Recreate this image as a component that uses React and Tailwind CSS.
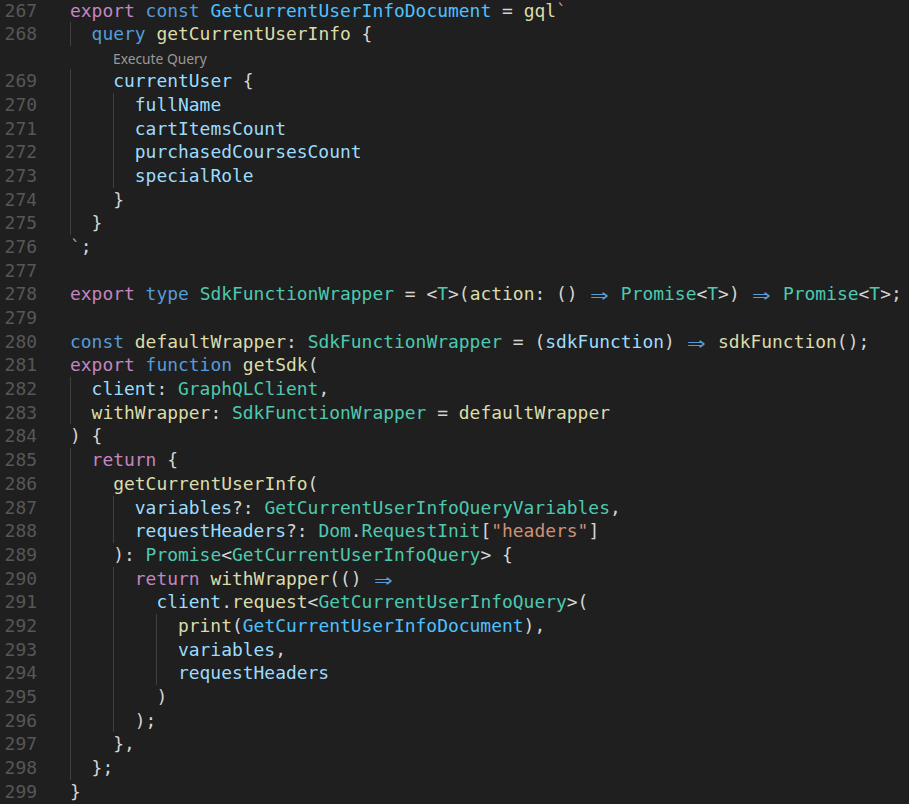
import React from 'react';

const C = {
  k: 'text-[#C586C0]',
  s: 'text-[#569CD6]',
  c: 'text-[#4FC1FF]',
  f: 'text-[#DCDCAA]',
  str: 'text-[#CE9178]',
  v: 'text-[#9CDCFE]',
  t: 'text-[#4EC9B0]',
  p: 'text-[#D4D4D4]',
};

const A = '=>';

// each line: [number, indent, tokens]; token = [text, colorKey] or A
const lines = [
  [267, 0, [['export', 'k'], [' '], ['const', 's'], [' '], ['GetCurrentUserInfoDocument', 'c'], [' = '], ['gql', 'f'], ['`', 'str']]],
  [268, 2, [['query', 's'], [' '], ['getCurrentUserInfo', 'f'], [' {']]],
  ['lens'],
  [269, 4, [['currentUser', 'v'], [' {']]],
  [270, 6, [['fullName', 'v']]],
  [271, 6, [['cartItemsCount', 'v']]],
  [272, 6, [['purchasedCoursesCount', 'v']]],
  [273, 6, [['specialRole', 'v']]],
  [274, 4, [['}']]],
  [275, 2, [['}']]],
  [276, 0, [['`', 'str'], [';']]],
  [277, 0, []],
  [278, 0, [['export', 'k'], [' '], ['type', 's'], [' '], ['SdkFunctionWrapper', 't'], [' = <'], ['T', 't'], ['>('], ['action', 'f'], [': () '], A, [' '], ['Promise', 't'], ['<'], ['T', 't'], ['>) '], A, [' '], ['Promise', 't'], ['<'], ['T', 't'], ['>;']]],
  [279, 0, []],
  [280, 0, [['const', 's'], [' '], ['defaultWrapper', 'f'], [': '], ['SdkFunctionWrapper', 't'], [' = ('], ['sdkFunction', 'v'], [') '], A, [' '], ['sdkFunction', 'f'], ['();']]],
  [281, 0, [['export', 'k'], [' '], ['function', 's'], [' '], ['getSdk', 'f'], ['(']]],
  [282, 2, [['client', 'v'], [': '], ['GraphQLClient', 't'], [',']]],
  [283, 2, [['withWrapper', 'f'], [': '], ['SdkFunctionWrapper', 't'], [' = '], ['defaultWrapper', 'f']]],
  [284, 0, [[') {']]],
  [285, 2, [['return', 'k'], [' {']]],
  [286, 4, [['getCurrentUserInfo', 'f'], ['(']]],
  [287, 6, [['variables', 'v'], ['?: '], ['GetCurrentUserInfoQueryVariables', 't'], [',']]],
  [288, 6, [['requestHeaders', 'v'], ['?: '], ['Dom', 't'], ['.'], ['RequestInit', 't'], ['['], ['"headers"', 'str'], [']']]],
  [289, 4, [['): '], ['Promise', 't'], ['<'], ['GetCurrentUserInfoQuery', 't'], ['> {']]],
  [290, 6, [['return', 'k'], [' '], ['withWrapper', 'f'], ['(() '], A]],
  [291, 8, [['client', 'v'], ['.'], ['request', 'f'], ['<'], ['GetCurrentUserInfoQuery', 't'], ['>(']]],
  [292, 10, [['print', 'f'], ['('], ['GetCurrentUserInfoDocument', 'c'], ['),']]],
  [293, 10, [['variables', 'v'], [',']]],
  [294, 10, [['requestHeaders', 'v']]],
  [295, 8, [[')']]],
  [296, 6, [[');']]],
  [297, 4, [['},']]],
  [298, 2, [['};']]],
  [299, 0, [['}']]],
];

const Indent = ({ n }) => {
  const segs = [];
  for (let k = 0; k < n; k += 4) {
    segs.push(Math.min(4, n - k));
  }
  return segs.map((w, i) => (
    <span
      key={i}
      className={`inline-block h-full border-l border-[#404040] ${w === 4 ? 'w-[4ch]' : 'w-[2ch]'}`}
    />
  ));
};

const Token = ({ tok }) => {
  if (tok === A) {
    return (
      <span className="inline-block w-[2ch] text-center text-[#569CD6]">
        <span className="inline-block scale-x-[1.7] scale-y-[1.25]">⇒</span>
      </span>
    );
  }
  const [text, color] = tok;
  return <span className={C[color || 'p']}>{text}</span>;
};

export default function App() {
  return (
    <div className="w-[909px] h-[804px] overflow-hidden bg-[#1f1f1f] font-['DejaVu_Sans_Mono',monospace] text-[17.94px]">
      <div className="mt-[-1.5px]">
        {lines.map((line, i) => {
          if (line[0] === 'lens') {
            return (
              <div key={i} className="flex h-[23.3px] items-center pt-[3px]">
                <div className="w-[37px]" />
                <div className="ml-[76px] font-['Noto_Sans',sans-serif] text-[13.8px] text-[#999999] leading-none">
                  Execute Query
                </div>
              </div>
            );
          }
          const [num, indent, toks] = line;
          return (
            <div key={i} className="flex h-[23.7px] leading-[23.7px] whitespace-pre">
              <div className="w-[37px] text-right text-[#575757]">{num}</div>
              <div className="ml-[33px] flex h-full">
                <Indent n={indent} />
                <span>
                  {toks.map((tok, j) => (
                    <Token key={j} tok={tok} />
                  ))}
                </span>
              </div>
            </div>
          );
        })}
      </div>
    </div>
  );
}
